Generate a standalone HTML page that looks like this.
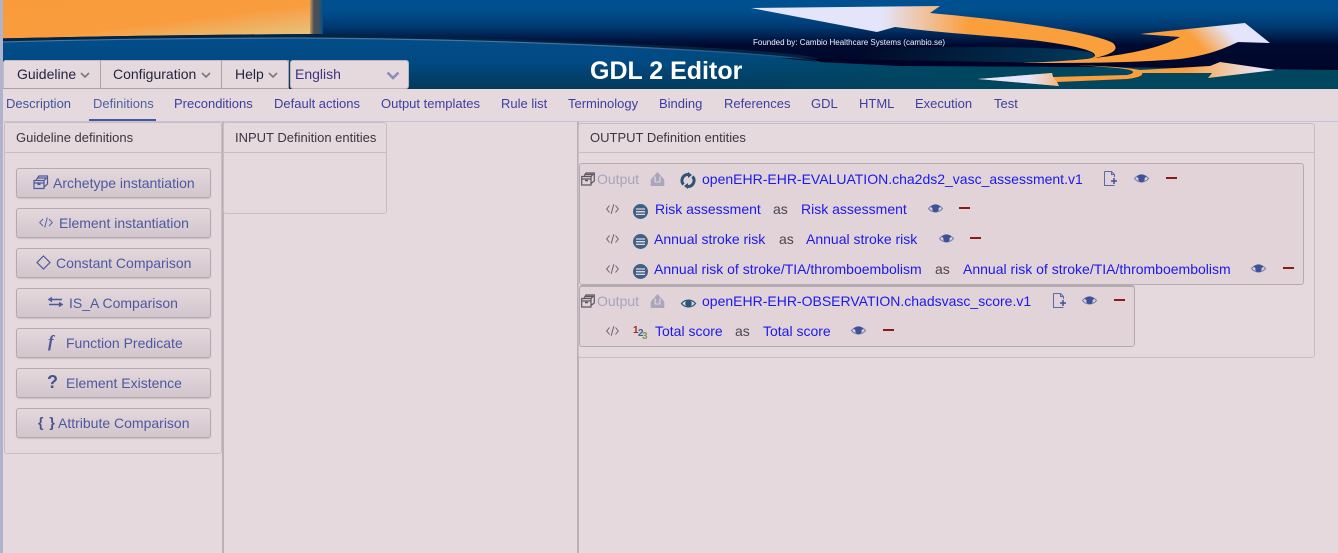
<!DOCTYPE html>
<html><head><meta charset="utf-8">
<style>
html,body{margin:0;padding:0}
body{width:1338px;height:553px;overflow:hidden;position:relative;background:#e6d9de;font-family:"Liberation Sans",sans-serif;font-size:14px}
.a{position:absolute;white-space:nowrap;line-height:16px}
.box{position:absolute;box-sizing:border-box;border:1px solid #c9bcc2;border-radius:3px}
.hd{position:absolute;left:0;right:0;top:0;height:29px;border-bottom:1px solid #c9bcc2;box-sizing:content-box}
.nav{color:#3a3f9e;top:96px;font-size:13px}
.btn{position:absolute;left:16px;width:195px;height:30px;box-sizing:border-box;border:1px solid #b3a9ae;border-radius:3px;background:linear-gradient(#e5d8dd,#d2c5cb);box-shadow:0 1px 1px rgba(0,0,0,.12)}
.bt{color:#4a5aa0}
.l{color:#1a1aee}
.g{color:#4a4550}
svg{position:absolute;overflow:visible}
.minus{position:absolute;width:11px;height:2px;background:#8b1a1a}
</style></head><body>
<!-- header -->
<div style="position:absolute;left:0;top:0;width:3px;height:553px;background:#b0b3cc"></div>
<svg style="left:3px;top:0;overflow:hidden" width="1335" height="89" viewBox="3 0 1335 89">
<defs>
<linearGradient id="bg" gradientUnits="userSpaceOnUse" x1="0" y1="0" x2="0" y2="89"><stop offset="0" stop-color="#005090"/><stop offset=".12" stop-color="#004f8e"/><stop offset=".3" stop-color="#003a72"/><stop offset=".5" stop-color="#000a30"/><stop offset="1" stop-color="#000326"/></linearGradient>
<linearGradient id="or" x1="0" y1="0" x2="1" y2="1"><stop offset="0" stop-color="#f99b3a"/><stop offset=".55" stop-color="#f99c3e"/><stop offset="1" stop-color="#e3c888"/></linearGradient>
<linearGradient id="edge" x1="0" y1="0" x2="1" y2="0"><stop offset="0" stop-color="#c89a5c"/><stop offset=".3" stop-color="#4e5054"/><stop offset=".7" stop-color="#40505e"/><stop offset="1" stop-color="#004f8e"/></linearGradient>
<linearGradient id="low" gradientUnits="userSpaceOnUse" x1="0" y1="40" x2="0" y2="89"><stop offset="0" stop-color="#024c88"/><stop offset=".45" stop-color="#014a84"/><stop offset="1" stop-color="#03395a"/></linearGradient>
<linearGradient id="teal" gradientUnits="userSpaceOnUse" x1="640" y1="0" x2="980" y2="0"><stop offset="0" stop-color="#01465f" stop-opacity="0"/><stop offset="1" stop-color="#01465f"/></linearGradient>
<linearGradient id="line" gradientUnits="userSpaceOnUse" x1="600" y1="0" x2="850" y2="0"><stop offset="0" stop-color="#4676a8"/><stop offset="1" stop-color="#4676a8" stop-opacity=".2"/></linearGradient>
<linearGradient id="lens" gradientUnits="userSpaceOnUse" x1="860" y1="0" x2="1090" y2="0"><stop offset="0" stop-color="#000a28"/><stop offset="1" stop-color="#01395a"/></linearGradient>
<linearGradient id="a1" gradientUnits="userSpaceOnUse" x1="751" y1="0" x2="1115" y2="0"><stop offset="0" stop-color="#e4e4fa"/><stop offset=".36" stop-color="#e4e4fa"/><stop offset=".6" stop-color="#fb9e3c"/><stop offset="1" stop-color="#fb9e3c"/></linearGradient>
<linearGradient id="a2" gradientUnits="userSpaceOnUse" x1="1190" y1="60" x2="1225" y2="28"><stop offset="0" stop-color="#fb9e3c"/><stop offset=".35" stop-color="#fb9e3c"/><stop offset="1" stop-color="#e4e4fa"/></linearGradient>
<linearGradient id="a3" gradientUnits="userSpaceOnUse" x1="1185" y1="0" x2="1262" y2="0"><stop offset="0" stop-color="#fb9e3c"/><stop offset="1" stop-color="#e8e8fa"/></linearGradient>
<linearGradient id="a4" gradientUnits="userSpaceOnUse" x1="1030" y1="0" x2="1075" y2="0"><stop offset="0" stop-color="#e4e4fa"/><stop offset="1" stop-color="#fb9e3c"/></linearGradient>
</defs>
<rect x="0" width="1338" height="89" fill="url(#bg)"/>
<path d="M0 0H312V34Q150 35 0 38.500Z" fill="url(#or)"/>
<rect x="310" width="13" height="34" fill="url(#edge)"/>
<path d="M0 38.500Q150 35 312 34L323 34.500Q470 37 633 44T820 59L820 64Q470 42 0 43Z" fill="#03233f"/>
<path d="M860 49Q1040 44 1090 52 1100 58 1090 63L860 62Z" fill="url(#lens)"/>
<path d="M0 42Q150 38 300 38 470 39 633 47T820 62Q1000 67 1100 67L1338 69V89H0Z" fill="url(#low)"/>
<path d="M633 47T820 62Q1000 67 1100 67L1338 69V89H633Z" fill="url(#teal)"/>
<path d="M780 58Q1000 62 1100 64 1200 68 1338 68V70L1100 67 900 66 820 62Z" fill="#000326"/>
<path d="M0 42Q150 38 300 38 470 39 633 47T820 62" fill="none" stroke="url(#line)" stroke-width="1.200"/>
<path d="M751 8L940 6 930 13C1020 21 1095 33 1113 43 1120 50 1112 54 1095 58 1082 62 1050 63 1023 63 1050 62 1085 62 1094 57 1100 52 1078 46 1040 41 1000 36 950 34 895 27L877 32Z" fill="url(#a1)"/>
<path d="M1095 58C1130 54 1160 48 1180 37L1140 34 1245 23 1270 43 1238 42C1225 48 1210 55 1180 59 1130 63 1080 63 1023 63 1050 62 1080 60 1095 58Z" fill="url(#a2)"/>
<path d="M1073 65C1100 66 1125 67 1140 70L1210 66 1220 62 1275 70 1208 78 1212 73H1142C1144 76 1135 78 1127 79L1057 82 1059 86 978 79 1052 73 1053 77 1127 75C1135 73 1136 71 1125 69 1110 67 1090 66 1073 65Z" fill="url(#a3)"/>
<path d="M1057 82L1059 86 978 79 1052 73 1053 77Z" fill="url(#a4)"/>
</svg>
<div class="a" style="left:753px;top:36px;font-size:8px;line-height:14px;color:#f2f2ff">Founded by: Cambio Healthcare Systems (cambio.se)</div>
<div class="a" style="left:590px;top:56px;font-size:25px;line-height:30px;font-weight:bold;color:#fff">GDL 2 Editor</div>
<!-- menu -->
<div style="position:absolute;left:3px;top:60px;width:286px;height:29px;background:#e6d9de;border-radius:3px 3px 0 0;box-shadow:inset 0 0 0 1px #c5bcc2"></div>
<div style="position:absolute;left:100px;top:60px;width:1px;height:29px;background:#aaa2a8"></div>
<div style="position:absolute;left:221px;top:60px;width:1px;height:29px;background:#aaa2a8"></div>
<div style="position:absolute;left:288px;top:60px;width:1px;height:29px;background:#aaa2a8"></div>
<div style="position:absolute;left:3px;top:88px;width:286px;height:1px;background:#aaa2a8"></div>
<div style="position:absolute;left:290px;top:60px;width:119px;height:29px;box-sizing:border-box;background:#e6d9de;border:1px solid #bdb4ba;border-radius:3px"></div>
<div class="a" style="left:17px;top:66px;color:#1f2440">Guideline</div>
<div class="a" style="left:113px;top:66px;color:#1f2440">Configuration</div>
<div class="a" style="left:235px;top:66px;color:#1f2440">Help</div>
<div class="a" style="left:295px;top:66px;color:#3d3480">English</div>
<svg style="left:80px;top:72px" width="10" height="6"><path d="M1 1L5 5 9 1" fill="none" stroke="#7b7780" stroke-width="1.600"/></svg>
<svg style="left:201px;top:72px" width="10" height="6"><path d="M1 1L5 5 9 1" fill="none" stroke="#7b7780" stroke-width="1.600"/></svg>
<svg style="left:268px;top:72px" width="10" height="6"><path d="M1 1L5 5 9 1" fill="none" stroke="#7b7780" stroke-width="1.600"/></svg>
<svg style="left:386px;top:71px" width="14" height="9"><path d="M1.500 1.500L7 7 12.500 1.500" fill="none" stroke="#8b8fb8" stroke-width="2.600"/></svg>
<!-- tabs -->
<div class="a nav" style="left:6px;color:#3f5298">Description</div>
<div class="a nav" style="left:93px;color:#4c62a0">Definitions</div>
<div class="a nav" style="left:174px">Preconditions</div>
<div class="a nav" style="left:274px">Default actions</div>
<div class="a nav" style="left:381px">Output templates</div>
<div class="a nav" style="left:501px">Rule list</div>
<div class="a nav" style="left:568px">Terminology</div>
<div class="a nav" style="left:659px">Binding</div>
<div class="a nav" style="left:724px">References</div>
<div class="a nav" style="left:811px">GDL</div>
<div class="a nav" style="left:859px">HTML</div>
<div class="a nav" style="left:915px">Execution</div>
<div class="a nav" style="left:994px">Test</div>
<div style="position:absolute;left:3px;top:121px;width:1335px;height:1px;background:#c6c2d6"></div>
<div style="position:absolute;left:89px;top:119px;width:67px;height:2px;background:#3f5a9e"></div>
<!-- separators -->
<div style="position:absolute;left:222px;top:122px;width:2px;height:431px;background:#b9b1b7"></div>
<div style="position:absolute;left:577px;top:122px;width:2px;height:431px;background:#b9b1b7"></div>
<!-- guideline definitions -->
<div class="box" style="left:4px;top:122px;width:218px;height:332px"><div class="hd"></div></div>
<div class="a" style="left:16px;top:130px;font-size:13px;color:#3a3540">Guideline definitions</div>
<div class="btn" style="top:168px"></div><div class="btn" style="top:208px"></div><div class="btn" style="top:248px"></div><div class="btn" style="top:288px"></div><div class="btn" style="top:328px"></div><div class="btn" style="top:368px"></div><div class="btn" style="top:408px"></div>
<div class="a bt" style="left:53px;top:175px">Archetype instantiation</div>
<div class="a bt" style="left:59px;top:215px">Element instantiation</div>
<div class="a bt" style="left:56px;top:255px">Constant Comparison</div>
<div class="a bt" style="left:69px;top:295px">IS_A Comparison</div>
<div class="a bt" style="left:66px;top:335px">Function Predicate</div>
<div class="a bt" style="left:66px;top:375px">Element Existence</div>
<div class="a bt" style="left:58px;top:415px">Attribute Comparison</div>
<svg style="left:33px;top:175px" width="15" height="15" viewBox="0 0 15 15"><path d="M1 5.500H11V13.500H1ZM1 8H11M3 5.500L4.500 3H13.500L11 5.500M4.500 3L6 1H14.500V9L11 12" fill="none" stroke="#4a5a9c" stroke-width="1.200"/><rect x="4.500" y="8.500" width="3" height="1.600" fill="#4a5a9c"/></svg>
<svg style="left:39px;top:217px" width="14" height="11"><path d="M4 2L.7 5.500 4 9M10 2L13.300 5.500 10 9M8.300 .5L5.700 10.500" fill="none" stroke="#5566a8" stroke-width="1"/></svg>
<svg style="left:36px;top:255px" width="15" height="15"><path d="M7.500 1L14 7.500 7.500 14 1 7.500Z" fill="none" stroke="#4a5a9c" stroke-width="1.200"/></svg>
<svg style="left:48px;top:297px" width="15" height="11"><path d="M3 2.500H14M14 7.500H1M4 .5L1 2.500 4 4.500M11 5.500L14 7.500 11 9.500" fill="none" stroke="#4a5a9c" stroke-width="1.500"/></svg>
<div class="a" style="left:48px;top:332px;font:italic bold 17px/20px 'Liberation Serif',serif;color:#4a5a9c">f</div>
<div class="a" style="left:47px;top:372px;font-size:18px;line-height:20px;font-weight:bold;color:#44548f">?</div>
<div class="a" style="left:38px;top:412px;font-size:14px;line-height:20px;font-weight:bold;color:#44548f;letter-spacing:1px">{ }</div>
<!-- input -->
<div class="box" style="left:223px;top:122px;width:164px;height:92px"><div class="hd"></div></div>
<div class="a" style="left:235px;top:130px;font-size:13px;color:#3a3540">INPUT Definition entities</div>
<!-- output -->
<div class="box" style="left:578px;top:123px;width:737px;height:235px"><div class="hd" style="height:28px"></div></div>
<div class="a" style="left:590px;top:130px;font-size:13px;color:#3a3540">OUTPUT Definition entities</div>
<div style="position:absolute;left:579px;top:163px;width:725px;height:122px;box-sizing:border-box;background:#e2d3d8;border:1px solid #b4abb0;border-radius:3px"></div>
<div style="position:absolute;left:579px;top:285px;width:556px;height:62px;box-sizing:border-box;background:#e2d3d8;border:1px solid #b4abb0;border-top:2px solid #b4abb0;border-radius:3px"></div>
<svg width="0" height="0" style="left:0;top:0"><defs><g id="e"><path d="M.5 5.500C4 1 11 1 14.500 5.500 11 10 4 10 .5 5.500Z" fill="none" stroke="#7385b6" stroke-width="1.100"/><path d="M2.500 4C5 .5 10 .5 12.500 4L10.500 5A3.200 3.200 0 1 1 4.500 5Z" fill="#3f5298"/></g>
<g id="c"><path d="M3.500 1.500L.7 5 3.500 8.500M9.500 1.500L12.300 5 9.500 8.500M7.800 .3L5.200 9.700" fill="none" stroke="#6b6070" stroke-width="1"/></g>
<g id="d"><circle cx="7.500" cy="7.500" r="7.500" fill="#3d6187"/><path d="M3 5H12M3 7.700H12M3 10.400H12" stroke="#e2d3d8" stroke-width="1.300"/></g>
<g id="u"><path d="M7.500 0L11.500 4.500H9.300V9.500H5.700V4.500H3.500Z" fill="#a9a6bc"/><path d="M.7 8L3 4.800H4.500V10.500H10.500V4.800H12L14.300 8V14H.7Z" fill="#a9a6bc"/></g>
<g id="k"><path d="M.7 4.500H10V13H.7ZM.7 7H10M3 4.500L4 2.500H12L10 4.500M4 2.500L5 1H13.300V9L10 11.500" fill="none" stroke="#5c5560" stroke-width="1.200"/><rect x="4" y="7.800" width="3" height="1.500" fill="#5c5560"/></g>
<g id="n"><path d="M.5.500H7.500L10.500 3.500V6M7.500.5V3.500H10.500M10.500 14.500H.5V.5" fill="none" stroke="#5a6aa6" stroke-width="1"/><path d="M7 10H13M10 7V13" stroke="#3f5298" stroke-width="1.500"/></g></defs></svg>
<!-- row 1 -->
<svg style="left:581px;top:172px" width="14" height="14"><use href="#k"/></svg>
<div class="a" style="left:597px;top:171px;color:#a4a4c0">Output</div>
<svg style="left:650px;top:172px" width="15" height="14"><use href="#u"/></svg>
<svg style="left:680px;top:172px" width="16" height="17" viewBox="0 0 16 17"><path d="M8 2.500A6 6 0 0 0 3.500 12.500M8 14.500A6 6 0 0 0 12.500 4.500" fill="none" stroke="#2d5578" stroke-width="3"/><path d="M8 0V6L12 3ZM8 11V17L4 14Z" fill="#2d5578"/></svg>
<div class="a l" style="left:702px;top:171px">openEHR-EHR-EVALUATION.cha2ds2_vasc_assessment.v1</div>
<svg style="left:1104px;top:171px" width="14" height="15"><use href="#n"/></svg>
<svg style="left:1134px;top:173px" width="15" height="11"><use href="#e"/></svg>
<div class="minus" style="left:1166px;top:177px"></div>
<!-- rows -->
<svg style="left:606px;top:204px" width="13" height="10"><use href="#c"/></svg>
<svg style="left:633px;top:204px" width="15" height="15"><use href="#d"/></svg>
<div class="a l" style="left:655px;top:201px">Risk assessment</div><div class="a g" style="left:773px;top:201px">as</div><div class="a l" style="left:801px;top:201px">Risk assessment</div>
<svg style="left:928px;top:203px" width="15" height="11"><use href="#e"/></svg><div class="minus" style="left:959px;top:207px"></div>
<svg style="left:606px;top:234px" width="13" height="10"><use href="#c"/></svg>
<svg style="left:633px;top:234px" width="15" height="15"><use href="#d"/></svg>
<div class="a l" style="left:654px;top:231px">Annual stroke risk</div><div class="a g" style="left:779px;top:231px">as</div><div class="a l" style="left:806px;top:231px">Annual stroke risk</div>
<svg style="left:939px;top:233px" width="15" height="11"><use href="#e"/></svg><div class="minus" style="left:970px;top:237px"></div>
<svg style="left:606px;top:264px" width="13" height="10"><use href="#c"/></svg>
<svg style="left:633px;top:264px" width="15" height="15"><use href="#d"/></svg>
<div class="a l" style="left:654px;top:261px">Annual risk of stroke/TIA/thromboembolism</div><div class="a g" style="left:935px;top:261px">as</div><div class="a l" style="left:963px;top:261px">Annual risk of stroke/TIA/thromboembolism</div>
<svg style="left:1251px;top:263px" width="15" height="11"><use href="#e"/></svg><div class="minus" style="left:1283px;top:267px"></div>
<!-- box 2 -->
<svg style="left:581px;top:294px" width="14" height="14"><use href="#k"/></svg>
<div class="a" style="left:597px;top:293px;color:#a4a4c0">Output</div>
<svg style="left:650px;top:294px" width="15" height="14"><use href="#u"/></svg>
<svg style="left:681px;top:298px" width="15" height="11" viewBox="0 0 15 11"><path d="M.5 5.500C4 1 11 1 14.500 5.500 11 10 4 10 .5 5.500Z" fill="#d8e0ea" stroke="#2d5578" stroke-width="1.300"/><circle cx="7.500" cy="5.500" r="3.300" fill="#2d5578"/></svg>
<div class="a l" style="left:702px;top:293px">openEHR-EHR-OBSERVATION.chadsvasc_score.v1</div>
<svg style="left:1053px;top:293px" width="14" height="15"><use href="#n"/></svg>
<svg style="left:1082px;top:295px" width="15" height="11"><use href="#e"/></svg>
<div class="minus" style="left:1114px;top:299px"></div>
<svg style="left:606px;top:326px" width="13" height="10"><use href="#c"/></svg>
<div class="a" style="left:633px;top:325px;font-size:10px;line-height:12px;font-weight:bold;color:#a02828">1</div>
<div class="a" style="left:638px;top:328px;font-size:10px;line-height:12px;font-weight:bold;color:#3d6187">2</div>
<div class="a" style="left:642px;top:331px;font-size:10px;line-height:12px;font-weight:bold;color:#6f9a5a">3</div>
<div class="a l" style="left:655px;top:323px">Total score</div><div class="a g" style="left:735px;top:323px">as</div><div class="a l" style="left:763px;top:323px">Total score</div>
<svg style="left:851px;top:325px" width="15" height="11"><use href="#e"/></svg><div class="minus" style="left:883px;top:329px"></div>
</body></html>
